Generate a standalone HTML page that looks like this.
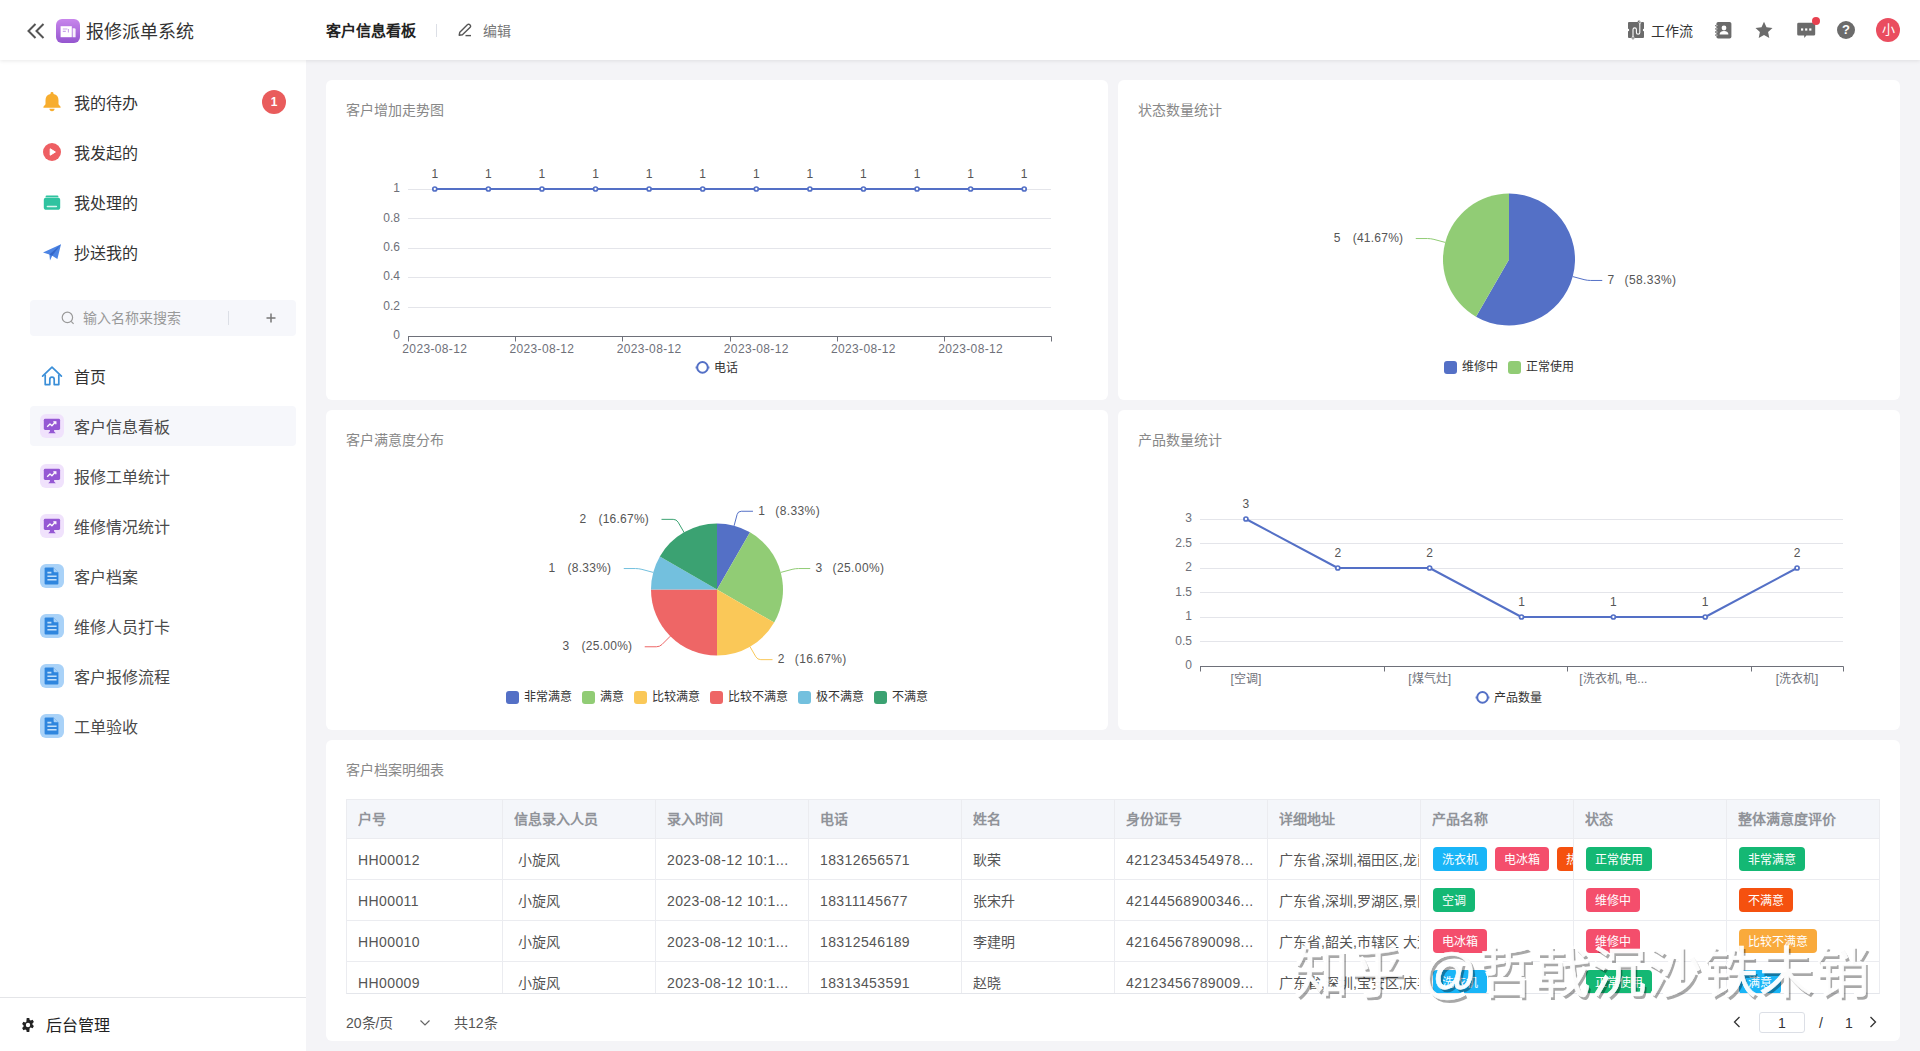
<!DOCTYPE html>
<html lang="zh-CN">
<head>
<meta charset="utf-8">
<title>报修派单系统</title>
<style>
*{box-sizing:border-box;margin:0;padding:0}
html,body{width:1920px;height:1051px;overflow:hidden}
body{position:relative;background:#f4f4f7;font-family:"Liberation Sans",sans-serif;color:#333;font-size:14px}
.abs{position:absolute}
#header{position:absolute;left:0;top:0;width:1920px;height:60px;background:#fff;box-shadow:0 1px 4px rgba(0,0,0,.09);z-index:5}
#sidebar{position:absolute;left:0;top:60px;width:306px;height:991px;background:#fff;z-index:4}
.t{position:absolute;white-space:nowrap;line-height:20px;height:20px}
.card{position:absolute;background:#fff;border-radius:6px}
.ctitle{position:absolute;left:20px;top:20px;font-size:14px;line-height:20px;color:#888;white-space:nowrap}
svg{position:absolute;left:0;top:0;overflow:visible}
svg text{font-family:"Liberation Sans",sans-serif;font-size:12px}
.nav{position:absolute;left:30px;width:266px;height:40px;border-radius:4px}
.nav .lbl{position:absolute;left:44px;top:12px;font-size:16px;line-height:20px;color:#4a4a4a;white-space:nowrap}
.nav .ic{position:absolute;left:10px;top:8px;width:24px;height:24px;border-radius:6px}
.nav.on{background:#f6f7fb}
.pi{background:#f0e2fc}
.di{background:#a9d2f8}

/*TBL*/
.tbl{position:absolute;left:20px;top:59px;width:1534px;height:195px;overflow:hidden;border:1px solid #ebecf0;border-bottom-color:#e4e6eb}
.tbl>div{position:absolute}
.thead{left:0;top:0;width:1534px;height:39px;background:#f4f6fa;border-bottom:1px solid #ebecf0}
.th{top:9px;height:20px;line-height:20px;font-size:14px;font-weight:bold;color:#909399;white-space:nowrap;overflow:hidden;margin-left:-1px}
.td{height:40px;line-height:42px;font-size:14px;color:#555;white-space:nowrap;overflow:hidden;margin-left:-1px}
.td.num{letter-spacing:.4px}
.tags{padding-top:8px;line-height:24px !important;font-size:0;margin-left:0}
.tag{display:inline-block;height:24px;line-height:22px;padding:2px 0 0;text-align:center;overflow:hidden;white-space:nowrap;border-radius:4px;color:#fff;font-size:12px;margin-right:8px;vertical-align:top}
.hl{left:0;width:1534px;height:1px;background:#ebecf0}
.vl{top:0;width:1px;height:195px;background:#ebecf0;margin-left:-1px}
/*/TBL*/
</style>
</head>
<body>

<svg width="0" height="0" style="position:absolute"><defs>
  <g id="mon">
    <rect x="3.800" y="4.800" width="16.300" height="11.200" rx="1.400" fill="#9558d4"/>
    <path d="M8.200 19.200h7.600l-1.700-1.800V16h-4.200v1.400z" fill="#9558d4"/>
    <path d="M7.200 12.800l2.800-2.800 1.900 1.700 3.500-3.700" fill="none" stroke="#fff" stroke-width="1.300" stroke-linejoin="round"/>
    <path d="M13.300 7.800h2.500v2.500" fill="none" stroke="#fff" stroke-width="1.300"/>
  </g>
  <g id="doc">
    <path d="M5.600 3.400h8l4.800 4.800v11.200a1 1 0 0 1-1 1H5.600a1 1 0 0 1-1-1V4.400a1 1 0 0 1 1-1z" fill="#2f86de"/>
    <path d="M13.600 3.400v3.800a1 1 0 0 0 1 1h3.800z" fill="#a9d2f8"/>
    <path d="M7.400 8.600h4M7.400 12.200h9.200M7.400 15.800h9.200" stroke="#c4e0fa" stroke-width="1.600"/>
  </g>
</defs></svg>
<!-- ================= HEADER ================= -->
<div id="header">
  <svg width="20" height="20" style="left:26px;top:21px" viewBox="0 0 20 20"><path d="M9.5 3 L2.5 10 L9.5 17 M17.5 3 L10.5 10 L17.5 17" fill="none" stroke="#555" stroke-width="2"/></svg>
  <div class="abs" style="left:56px;top:19px;width:24px;height:24px;border-radius:6px;background:linear-gradient(180deg,#c886ec 0%,#9556cf 100%)">
    <svg width="24" height="24" viewBox="0 0 24 24"><path d="M4.600 7.200h11.200v11h-11.200z" fill="#fff"/><path d="M16.600 9.200h1.600a1.400 1.400 0 0 1 1.400 1.400v7.600h-3z" fill="#fff" opacity=".9"/><path d="M6.800 10h4.600M6.800 12.400h3" stroke="#c9a3ea" stroke-width="1.100"/><path d="M12.400 10v3.400" stroke="#c9a3ea" stroke-width="1.100"/></svg>
  </div>
  <div class="t" style="left:86px;top:22px;font-size:18px;color:#333">报修派单系统</div>
  <div class="t" style="left:326px;top:21px;font-size:15px;font-weight:bold;color:#222">客户信息看板</div>
  <div class="abs" style="left:436px;top:24px;width:1px;height:13px;background:#dcdfe6"></div>
  <svg width="16" height="16" style="left:457px;top:22px" viewBox="0 0 16 16"><path d="M2.2 13.2 L2.8 10.2 L10.6 2.6 a1.4 1.4 0 0 1 2 0 l.6 .6 a1.4 1.4 0 0 1 0 2 L5.4 12.8 Z" fill="none" stroke="#555" stroke-width="1.4" stroke-linejoin="round"/><path d="M8.5 13.6 H14" stroke="#555" stroke-width="1.4"/></svg>
  <div class="t" style="left:483px;top:21px;font-size:14px;color:#777">编辑</div>
  <!-- right icons -->
  <svg width="18" height="18" style="left:1627px;top:21px" viewBox="0 0 18 18">
    <path d="M2 1h8.600a1.400 1.400 0 0 1 2.800 0H16a1 1 0 0 1 1 1v5.800a1.200 1.200 0 0 0 0 2.400V16a1 1 0 0 1-1 1H7.400a1.400 1.400 0 0 1-2.800 0H2a1 1 0 0 1-1-1v-5.800a1.200 1.200 0 0 0 0-2.400V2a1 1 0 0 1 1-1z" fill="#6b6b6b"/>
    <path d="M6 16V8.600a1.700 1.700 0 0 1 3.400 0v3a1.700 1.700 0 0 0 3.400 0V2" fill="none" stroke="#fff" stroke-width="1.100"/>
    <circle cx="6" cy="16.400" r="1" fill="#6b6b6b" stroke="#fff" stroke-width=".6"/><circle cx="12.800" cy="1.600" r="1" fill="#6b6b6b" stroke="#fff" stroke-width=".6"/>
  </svg>
  <div class="t" style="left:1651px;top:21px;font-size:14px;color:#333">工作流</div>
  <svg width="18" height="18" style="left:1714px;top:21px" viewBox="0 0 18 18">
    <rect x="2.4" y="1" width="15" height="16.6" rx="1.8" fill="#6b6b6b"/>
    <path d="M1 4.6h2.6M1 7.8h2.6M1 11h2.6M1 14.2h2.6" stroke="#6b6b6b" stroke-width="1.3"/>
    <path d="M1.6 4.6h2.2M1.6 7.8h2.2M1.6 11h2.2M1.6 14.2h2.2" stroke="#fff" stroke-width=".5"/>
    <circle cx="10" cy="7" r="2.4" fill="#fff"/>
    <path d="M5.6 13.6a4.4 3.6 0 0 1 8.8 0z" fill="#fff"/>
  </svg>
  <svg width="18" height="18" style="left:1755px;top:21px" viewBox="0 0 18 18"><path d="M9 .8l2.5 5.5 6 .7-4.4 4.1 1.2 5.9L9 14l-5.3 3 1.2-5.9L.5 7l6-.7z" fill="#6b6b6b"/></svg>
  <svg width="24" height="24" style="left:1796px;top:14px" viewBox="0 0 24 24">
    <path d="M2.6 8.8h15.2a1.4 1.4 0 0 1 1.4 1.4v10a1.4 1.4 0 0 1-1.4 1.4H10.4L8.2 24v-2.4H2.6a1.4 1.4 0 0 1-1.4-1.4v-10a1.4 1.4 0 0 1 1.4-1.4z" fill="#6b6b6b"/>
    <rect x="5" y="14.4" width="2.2" height="2.2" fill="#fff"/><rect x="9.1" y="14.4" width="2.2" height="2.2" fill="#fff"/><rect x="13.2" y="14.4" width="2.2" height="2.2" fill="#fff"/>
    <circle cx="20" cy="7" r="4" fill="#e8404f"/>
  </svg>
  <div class="abs" style="left:1837px;top:21px;width:18px;height:18px;border-radius:9px;background:#6b6b6b;color:#fff;font-size:13px;font-weight:bold;line-height:18px;text-align:center">?</div>
  <div class="abs" style="left:1876px;top:18px;width:24px;height:24px;border-radius:12px;background:#ea4d5f;color:#fff;font-size:13px;line-height:24px;text-align:center">小</div>
</div>


<!-- ================= SIDEBAR ================= -->
<div id="sidebar">
  <!-- top group (coords relative to sidebar: page y - 60) -->
  <svg width="20" height="20" style="left:42px;top:31px" viewBox="0 0 20 20">
    <g transform="translate(10 10.400) scale(1.160 1.120) translate(-10 -10)"><path d="M10 1.6a1.3 1.3 0 0 1 1.3 1.3v.5a5.6 5.6 0 0 1 4.3 5.5v3.6l1.8 2.3v.9H2.6v-.9l1.8-2.3V8.9a5.6 5.6 0 0 1 4.3-5.5v-.5A1.3 1.3 0 0 1 10 1.600z" fill="#f7ad2e"/>
    <path d="M7.8 16.6h4.4a2.2 2.2 0 0 1-4.4 0z" fill="#f7ad2e"/>
  </g>
  </svg>
  <div class="t" style="left:74px;top:34px;font-size:16px;color:#333">我的待办</div>
  <div class="abs" style="left:262px;top:30px;width:24px;height:24px;border-radius:12px;background:#e95c5c;color:#fff;font-size:12px;font-weight:bold;line-height:24px;text-align:center">1</div>

  <svg width="20" height="20" style="left:42px;top:82px" viewBox="0 0 20 20"><circle cx="10" cy="10" r="9" fill="#ee5f63"/><path d="M8.200 6.800v6.400L13.400 10z" fill="#fff" stroke="#fff" stroke-width="1" stroke-linejoin="round"/></svg>
  <div class="t" style="left:74px;top:84px;font-size:16px;color:#333">我发起的</div>

  <svg width="20" height="20" style="left:42px;top:132px" viewBox="0 0 20 20">
    <path d="M4.6 3.4h10.8a1 1 0 0 1 1 1v.6H3.6v-.6a1 1 0 0 1 1-1z" fill="#2fc3a0"/>
    <rect x="1.8" y="5.400" width="16.4" height="12.400" rx="2.6" fill="#2fc3a0"/>
    <path d="M5.400 14.400h9" stroke="#d9f6ee" stroke-width="1.500" stroke-linecap="round"/>
  </svg>
  <div class="t" style="left:74px;top:134px;font-size:16px;color:#333">我处理的</div>

  <svg width="20" height="20" style="left:42px;top:183px" viewBox="0 0 20 20">
    <path d="M1 9.400L19 1.200 15.400 16 10.200 12.800 8 17.400 7.400 11.600z" fill="#4c84e4"/>
    <path d="M7.400 11.600L19 1.200 10.200 12.800" fill="#3567c9"/>
  </svg>
  <div class="t" style="left:74px;top:184px;font-size:16px;color:#333">抄送我的</div>

  <!-- search -->
  <div class="abs" style="left:30px;top:240px;width:266px;height:36px;border-radius:4px;background:#f6f7fb">
    <svg width="16" height="16" style="left:30px;top:10px" viewBox="0 0 16 16"><circle cx="7.400" cy="7.400" r="5.200" fill="none" stroke="#9a9a9a" stroke-width="1.200"/><path d="M11.200 11.400l2.400 2.400" stroke="#9a9a9a" stroke-width="1.200"/></svg>
    <div class="t" style="left:53px;top:8px;font-size:14px;color:#999">输入名称来搜索</div>
    <div class="abs" style="left:198px;top:11px;width:1px;height:14px;background:#dcdfe6"></div>
    <svg width="12" height="12" style="left:235px;top:12px" viewBox="0 0 12 12"><path d="M6 1.500v9M1.500 6h9" stroke="#777" stroke-width="1.500"/></svg>
  </div>

  <!-- nav -->
  <div class="nav" style="top:296px">
    <svg width="24" height="24" style="left:10px;top:8px" viewBox="0 0 24 24"><path d="M2.600 12.200L12 3.200l9.400 9" fill="none" stroke="#3b8fd8" stroke-width="1.700" stroke-linecap="round" stroke-linejoin="round"/><path d="M5.200 10.600v10h4.600v-5.200a2.200 2.200 0 0 1 4.400 0v5.200h4.600v-10" fill="none" stroke="#3b8fd8" stroke-width="1.700" stroke-linejoin="round"/></svg>
    <div class="lbl" style="color:#333">首页</div>
  </div>
  <div class="nav on" style="top:346px"><div class="ic pi"><svg width="24" height="24" viewBox="0 0 24 24"><use href="#mon"/></svg></div><div class="lbl">客户信息看板</div></div>
  <div class="nav" style="top:396px"><div class="ic pi"><svg width="24" height="24" viewBox="0 0 24 24"><use href="#mon"/></svg></div><div class="lbl">报修工单统计</div></div>
  <div class="nav" style="top:446px"><div class="ic pi"><svg width="24" height="24" viewBox="0 0 24 24"><use href="#mon"/></svg></div><div class="lbl">维修情况统计</div></div>
  <div class="nav" style="top:496px"><div class="ic di"><svg width="24" height="24" viewBox="0 0 24 24"><use href="#doc"/></svg></div><div class="lbl">客户档案</div></div>
  <div class="nav" style="top:546px"><div class="ic di"><svg width="24" height="24" viewBox="0 0 24 24"><use href="#doc"/></svg></div><div class="lbl">维修人员打卡</div></div>
  <div class="nav" style="top:596px"><div class="ic di"><svg width="24" height="24" viewBox="0 0 24 24"><use href="#doc"/></svg></div><div class="lbl">客户报修流程</div></div>
  <div class="nav" style="top:646px"><div class="ic di"><svg width="24" height="24" viewBox="0 0 24 24"><use href="#doc"/></svg></div><div class="lbl">工单验收</div></div>

  <!-- footer -->
  <div class="abs" style="left:0;top:937px;width:306px;height:1px;background:#e4e5e8"></div>
  <svg width="14" height="14" style="left:21px;top:958px" viewBox="0 0 14 14">
    <path d="M5.700 0h2.600l.4 1.900 1.100.6 1.800-.7 1.300 2.200-1.400 1.300v1.400l1.400 1.300-1.300 2.200-1.800-.7-1.100.6L8.300 14H5.700l-.4-1.900-1.100-.6-1.800.7L1.100 10l1.400-1.300V7.300L1.100 6l1.300-2.200 1.800.7 1.100-.6z" fill="#222"/>
    <circle cx="7" cy="7" r="2.200" fill="#fff"/>
  </svg>
  <div class="t" style="left:46px;top:956px;font-size:16px;color:#222">后台管理</div>
</div>

<!-- ================= CARDS ================= -->
<div class="card" id="c1" style="left:326px;top:80px;width:782px;height:320px"><div class="ctitle">客户增加走势图</div>
<svg width="782" height="320" viewBox="0 0 782 320">
<path d="M82 227.5H725" stroke="#e4e5ea" stroke-width="1"/>
<path d="M82 197.5H725" stroke="#e4e5ea" stroke-width="1"/>
<path d="M82 168.5H725" stroke="#e4e5ea" stroke-width="1"/>
<path d="M82 138.5H725" stroke="#e4e5ea" stroke-width="1"/>
<path d="M82 109.5H725" stroke="#e4e5ea" stroke-width="1"/>
<text x="74" y="259.1" text-anchor="end" fill="#6e7079">0</text>
<text x="74" y="229.7" text-anchor="end" fill="#6e7079">0.2</text>
<text x="74" y="200.3" text-anchor="end" fill="#6e7079">0.4</text>
<text x="74" y="170.9" text-anchor="end" fill="#6e7079">0.6</text>
<text x="74" y="141.5" text-anchor="end" fill="#6e7079">0.8</text>
<text x="74" y="112.1" text-anchor="end" fill="#6e7079">1</text>
<path d="M82 256.5H725.5" stroke="#6e7079" stroke-width="1"/>
<path d="M82.5 256.5v5M189.5 256.5v5M296.5 256.5v5M404.5 256.5v5M511.5 256.5v5M618.5 256.5v5M725.5 256.5v5" stroke="#6e7079" stroke-width="1"/>
<text x="108.79" y="273" text-anchor="middle" fill="#6e7079" style="letter-spacing:.35px">2023-08-12</text>
<text x="215.96" y="273" text-anchor="middle" fill="#6e7079" style="letter-spacing:.35px">2023-08-12</text>
<text x="323.12" y="273" text-anchor="middle" fill="#6e7079" style="letter-spacing:.35px">2023-08-12</text>
<text x="430.29" y="273" text-anchor="middle" fill="#6e7079" style="letter-spacing:.35px">2023-08-12</text>
<text x="537.46" y="273" text-anchor="middle" fill="#6e7079" style="letter-spacing:.35px">2023-08-12</text>
<text x="644.62" y="273" text-anchor="middle" fill="#6e7079" style="letter-spacing:.35px">2023-08-12</text>
<polyline points="108.79,109 162.38,109 215.96,109 269.54,109 323.12,109 376.71,109 430.29,109 483.88,109 537.46,109 591.04,109 644.62,109 698.21,109" fill="none" stroke="#5470c6" stroke-width="2" stroke-linejoin="bevel"/>
<circle cx="108.79" cy="109" r="2" fill="#fff" stroke="#5470c6" stroke-width="1.700"/>
<text x="108.79" y="97.5" text-anchor="middle" fill="#555">1</text>
<circle cx="162.38" cy="109" r="2" fill="#fff" stroke="#5470c6" stroke-width="1.700"/>
<text x="162.38" y="97.5" text-anchor="middle" fill="#555">1</text>
<circle cx="215.96" cy="109" r="2" fill="#fff" stroke="#5470c6" stroke-width="1.700"/>
<text x="215.96" y="97.5" text-anchor="middle" fill="#555">1</text>
<circle cx="269.54" cy="109" r="2" fill="#fff" stroke="#5470c6" stroke-width="1.700"/>
<text x="269.54" y="97.5" text-anchor="middle" fill="#555">1</text>
<circle cx="323.12" cy="109" r="2" fill="#fff" stroke="#5470c6" stroke-width="1.700"/>
<text x="323.12" y="97.5" text-anchor="middle" fill="#555">1</text>
<circle cx="376.71" cy="109" r="2" fill="#fff" stroke="#5470c6" stroke-width="1.700"/>
<text x="376.71" y="97.5" text-anchor="middle" fill="#555">1</text>
<circle cx="430.29" cy="109" r="2" fill="#fff" stroke="#5470c6" stroke-width="1.700"/>
<text x="430.29" y="97.5" text-anchor="middle" fill="#555">1</text>
<circle cx="483.88" cy="109" r="2" fill="#fff" stroke="#5470c6" stroke-width="1.700"/>
<text x="483.88" y="97.5" text-anchor="middle" fill="#555">1</text>
<circle cx="537.46" cy="109" r="2" fill="#fff" stroke="#5470c6" stroke-width="1.700"/>
<text x="537.46" y="97.5" text-anchor="middle" fill="#555">1</text>
<circle cx="591.04" cy="109" r="2" fill="#fff" stroke="#5470c6" stroke-width="1.700"/>
<text x="591.04" y="97.5" text-anchor="middle" fill="#555">1</text>
<circle cx="644.62" cy="109" r="2" fill="#fff" stroke="#5470c6" stroke-width="1.700"/>
<text x="644.62" y="97.5" text-anchor="middle" fill="#555">1</text>
<circle cx="698.21" cy="109" r="2" fill="#fff" stroke="#5470c6" stroke-width="1.700"/>
<text x="698.21" y="97.5" text-anchor="middle" fill="#555">1</text>
<circle cx="376.5" cy="287.400" r="5.300" fill="#fff" stroke="#5470c6" stroke-width="2"/>
<path d="M369.6 287.400h1.200M382.2 287.400h1.200" stroke="#5470c6" stroke-width="2"/>
<text x="388" y="291.600" fill="#333">电话</text>
</svg>
</div><!--/c1-->
<div class="card" id="c2" style="left:1118px;top:80px;width:782px;height:320px"><div class="ctitle">状态数量统计</div>
<svg width="782" height="320" viewBox="0 0 782 320">
<path d="M391 179.5L391 113.5A66 66 0 1 1 358 236.66Z" fill="#5470c6"/>
<path d="M454.75 196.58L466.05 199.61Q469.24 200.46 472.54 200.46L484.24 200.46" fill="none" stroke="#5470c6" stroke-width="1"/>
<text x="489.54" y="203.86" fill="#555">7</text>
<text x="506.54" y="203.86" fill="#555" style="letter-spacing:.4px">(58.33%)</text>
<path d="M391 179.5L358 236.66A66 66 0 0 1 391 113.5Z" fill="#91cc75"/>
<path d="M327.25 162.42L315.95 159.39Q312.76 158.54 309.46 158.54L297.76 158.54" fill="none" stroke="#91cc75" stroke-width="1"/>
<text x="285.36" y="161.94" fill="#555" text-anchor="end" style="letter-spacing:.25px">(41.67%)</text>
<text x="215.66" y="161.94" fill="#555">5</text>
<rect x="326" y="281" width="13" height="13" rx="3" fill="#5470c6"/>
<text x="344" y="290.900" fill="#333">维修中</text>
<rect x="390" y="281" width="13" height="13" rx="3" fill="#91cc75"/>
<text x="408" y="290.900" fill="#333">正常使用</text>
</svg>
</div><!--/c2-->
<div class="card" id="c3" style="left:326px;top:410px;width:782px;height:320px"><div class="ctitle">客户满意度分布</div>
<svg width="782" height="320" viewBox="0 0 782 320">
<path d="M391 179.5L391 113.5A66 66 0 0 1 424 122.34Z" fill="#5470c6"/>
<path d="M408.08 115.75L411.11 104.45Q411.96 101.26 415.26 101.26L426.96 101.26" fill="none" stroke="#5470c6" stroke-width="1"/>
<text x="432.26" y="104.66" fill="#555">1</text>
<text x="449.26" y="104.66" fill="#555" style="letter-spacing:.4px">(8.33%)</text>
<path d="M391 179.5L424 122.34A66 66 0 0 1 448.16 212.5Z" fill="#91cc75"/>
<path d="M454.75 162.42L466.05 159.39Q469.24 158.54 472.54 158.54L484.24 158.54" fill="none" stroke="#91cc75" stroke-width="1"/>
<text x="489.54" y="161.94" fill="#555">3</text>
<text x="506.54" y="161.94" fill="#555" style="letter-spacing:.4px">(25.00%)</text>
<path d="M391 179.5L448.16 212.5A66 66 0 0 1 391 245.5Z" fill="#fac858"/>
<path d="M424 236.66L429.85 246.79Q431.5 249.65 434.8 249.65L446.5 249.65" fill="none" stroke="#fac858" stroke-width="1"/>
<text x="451.8" y="253.05" fill="#555">2</text>
<text x="468.8" y="253.05" fill="#555" style="letter-spacing:.4px">(16.67%)</text>
<path d="M391 179.5L391 245.5A66 66 0 0 1 325 179.5Z" fill="#ee6666"/>
<path d="M344.33 226.17L336.06 234.44Q333.72 236.78 330.42 236.78L318.72 236.78" fill="none" stroke="#ee6666" stroke-width="1"/>
<text x="306.32" y="240.18" fill="#555" text-anchor="end" style="letter-spacing:.25px">(25.00%)</text>
<text x="236.62" y="240.18" fill="#555">3</text>
<path d="M391 179.5L325 179.5A66 66 0 0 1 333.84 146.5Z" fill="#73c0de"/>
<path d="M327.25 162.42L315.95 159.39Q312.76 158.54 309.46 158.54L297.76 158.54" fill="none" stroke="#73c0de" stroke-width="1"/>
<text x="285.36" y="161.94" fill="#555" text-anchor="end" style="letter-spacing:.25px">(8.33%)</text>
<text x="222.58" y="161.94" fill="#555">1</text>
<path d="M391 179.5L333.84 146.5A66 66 0 0 1 391 113.5Z" fill="#3ba272"/>
<path d="M358 122.34L352.15 112.21Q350.5 109.35 347.2 109.35L335.5 109.35" fill="none" stroke="#3ba272" stroke-width="1"/>
<text x="323.1" y="112.75" fill="#555" text-anchor="end" style="letter-spacing:.25px">(16.67%)</text>
<text x="253.4" y="112.75" fill="#555">2</text>
<rect x="180" y="281" width="13" height="13" rx="3" fill="#5470c6"/>
<text x="198" y="290.900" fill="#333">非常满意</text>
<rect x="256" y="281" width="13" height="13" rx="3" fill="#91cc75"/>
<text x="274" y="290.900" fill="#333">满意</text>
<rect x="308" y="281" width="13" height="13" rx="3" fill="#fac858"/>
<text x="326" y="290.900" fill="#333">比较满意</text>
<rect x="384" y="281" width="13" height="13" rx="3" fill="#ee6666"/>
<text x="402" y="290.900" fill="#333">比较不满意</text>
<rect x="472" y="281" width="13" height="13" rx="3" fill="#73c0de"/>
<text x="490" y="290.900" fill="#333">极不满意</text>
<rect x="548" y="281" width="13" height="13" rx="3" fill="#3ba272"/>
<text x="566" y="290.900" fill="#333">不满意</text>
</svg>
</div><!--/c3-->
<div class="card" id="c4" style="left:1118px;top:410px;width:782px;height:320px"><div class="ctitle">产品数量统计</div>
<svg width="782" height="320" viewBox="0 0 782 320">
<path d="M82 231.5H725" stroke="#e4e5ea" stroke-width="1"/>
<path d="M82 207.5H725" stroke="#e4e5ea" stroke-width="1"/>
<path d="M82 182.5H725" stroke="#e4e5ea" stroke-width="1"/>
<path d="M82 158.5H725" stroke="#e4e5ea" stroke-width="1"/>
<path d="M82 133.5H725" stroke="#e4e5ea" stroke-width="1"/>
<path d="M82 109.5H725" stroke="#e4e5ea" stroke-width="1"/>
<text x="74" y="259.1" text-anchor="end" fill="#6e7079">0</text>
<text x="74" y="234.6" text-anchor="end" fill="#6e7079">0.5</text>
<text x="74" y="210.1" text-anchor="end" fill="#6e7079">1</text>
<text x="74" y="185.6" text-anchor="end" fill="#6e7079">1.5</text>
<text x="74" y="161.1" text-anchor="end" fill="#6e7079">2</text>
<text x="74" y="136.6" text-anchor="end" fill="#6e7079">2.5</text>
<text x="74" y="112.1" text-anchor="end" fill="#6e7079">3</text>
<path d="M82 256.5H725.5" stroke="#6e7079" stroke-width="1"/>
<path d="M82.5 256.5v5M266.5 256.5v5M449.5 256.5v5M633.5 256.5v5M725.5 256.5v5" stroke="#6e7079" stroke-width="1"/>
<text x="127.93" y="273" text-anchor="middle" fill="#6e7079">[空调]</text>
<text x="311.64" y="273" text-anchor="middle" fill="#6e7079">[煤气灶]</text>
<text x="495.36" y="273" text-anchor="middle" fill="#6e7079">[洗衣机, 电...</text>
<text x="679.07" y="273" text-anchor="middle" fill="#6e7079">[洗衣机]</text>
<polyline points="127.93,109 219.79,158 311.64,158 403.5,207 495.36,207 587.21,207 679.07,158" fill="none" stroke="#5470c6" stroke-width="2" stroke-linejoin="bevel"/>
<circle cx="127.93" cy="109" r="2" fill="#fff" stroke="#5470c6" stroke-width="1.700"/>
<text x="127.93" y="97.5" text-anchor="middle" fill="#555">3</text>
<circle cx="219.79" cy="158" r="2" fill="#fff" stroke="#5470c6" stroke-width="1.700"/>
<text x="219.79" y="146.5" text-anchor="middle" fill="#555">2</text>
<circle cx="311.64" cy="158" r="2" fill="#fff" stroke="#5470c6" stroke-width="1.700"/>
<text x="311.64" y="146.5" text-anchor="middle" fill="#555">2</text>
<circle cx="403.5" cy="207" r="2" fill="#fff" stroke="#5470c6" stroke-width="1.700"/>
<text x="403.5" y="195.5" text-anchor="middle" fill="#555">1</text>
<circle cx="495.36" cy="207" r="2" fill="#fff" stroke="#5470c6" stroke-width="1.700"/>
<text x="495.36" y="195.5" text-anchor="middle" fill="#555">1</text>
<circle cx="587.21" cy="207" r="2" fill="#fff" stroke="#5470c6" stroke-width="1.700"/>
<text x="587.21" y="195.5" text-anchor="middle" fill="#555">1</text>
<circle cx="679.07" cy="158" r="2" fill="#fff" stroke="#5470c6" stroke-width="1.700"/>
<text x="679.07" y="146.5" text-anchor="middle" fill="#555">2</text>
<circle cx="364.5" cy="287.400" r="5.300" fill="#fff" stroke="#5470c6" stroke-width="2"/>
<path d="M357.6 287.400h1.200M370.2 287.400h1.200" stroke="#5470c6" stroke-width="2"/>
<text x="376" y="291.600" fill="#333">产品数量</text>
</svg>
</div><!--/c4-->
<div class="card" id="c5" style="left:326px;top:740px;width:1574px;height:301px"><div class="ctitle">客户档案明细表</div>
<div class="tbl">
<div class="thead"></div>
<div class="th" style="left:12px;width:143px">户号</div>
<div class="th" style="left:168px;width:140px">信息录入人员</div>
<div class="th" style="left:321px;width:140px">录入时间</div>
<div class="th" style="left:474px;width:140px">电话</div>
<div class="th" style="left:627px;width:140px">姓名</div>
<div class="th" style="left:780px;width:140px">身份证号</div>
<div class="th" style="left:933px;width:140px">详细地址</div>
<div class="th" style="left:1086px;width:140px">产品名称</div>
<div class="th" style="left:1239px;width:140px">状态</div>
<div class="th" style="left:1392px;width:141px">整体满意度评价</div>
<div class="hl" style="top:79px"></div>
<div class="td num" style="left:12px;top:39px;width:143px">HH00012</div>
<div class="td" style="left:172px;top:39px;width:136px">小旋风</div>
<div class="td num" style="left:321px;top:39px;width:140px">2023-08-12 10:1...</div>
<div class="td num" style="left:474px;top:39px;width:140px">18312656571</div>
<div class="td" style="left:627px;top:39px;width:140px">耿荣</div>
<div class="td num" style="left:780px;top:39px;width:140px">42123453454978...</div>
<div class="td" style="left:933px;top:39px;width:140px">广东省,深圳,福田区,龙岗街道</div>
<div class="td tags" style="left:1086px;top:39px;width:140px"><span class="tag" style="background:#19b5f7;width:54px">洗衣机</span><span class="tag" style="background:#f44e6c;width:54px">电冰箱</span><span class="tag" style="background:#f5510f;width:54px">热水器</span></div>
<div class="td tags" style="left:1239px;top:39px;width:140px"><span class="tag" style="background:#14b874;width:66px">正常使用</span></div>
<div class="td tags" style="left:1392px;top:39px;width:141px"><span class="tag" style="background:#14b874;width:66px">非常满意</span></div>
<div class="hl" style="top:120px"></div>
<div class="td num" style="left:12px;top:80px;width:143px">HH00011</div>
<div class="td" style="left:172px;top:80px;width:136px">小旋风</div>
<div class="td num" style="left:321px;top:80px;width:140px">2023-08-12 10:1...</div>
<div class="td num" style="left:474px;top:80px;width:140px">18311145677</div>
<div class="td" style="left:627px;top:80px;width:140px">张宋升</div>
<div class="td num" style="left:780px;top:80px;width:140px">42144568900346...</div>
<div class="td" style="left:933px;top:80px;width:140px">广东省,深圳,罗湖区,景田路</div>
<div class="td tags" style="left:1086px;top:80px;width:140px"><span class="tag" style="background:#14b874;width:42px">空调</span></div>
<div class="td tags" style="left:1239px;top:80px;width:140px"><span class="tag" style="background:#f44e6c;width:54px">维修中</span></div>
<div class="td tags" style="left:1392px;top:80px;width:141px"><span class="tag" style="background:#f5510f;width:54px">不满意</span></div>
<div class="hl" style="top:161px"></div>
<div class="td num" style="left:12px;top:121px;width:143px">HH00010</div>
<div class="td" style="left:172px;top:121px;width:136px">小旋风</div>
<div class="td num" style="left:321px;top:121px;width:140px">2023-08-12 10:1...</div>
<div class="td num" style="left:474px;top:121px;width:140px">18312546189</div>
<div class="td" style="left:627px;top:121px;width:140px">李建明</div>
<div class="td num" style="left:780px;top:121px;width:140px">42164567890098...</div>
<div class="td" style="left:933px;top:121px;width:140px">广东省,韶关,市辖区 大道东路</div>
<div class="td tags" style="left:1086px;top:121px;width:140px"><span class="tag" style="background:#f44e6c;width:54px">电冰箱</span></div>
<div class="td tags" style="left:1239px;top:121px;width:140px"><span class="tag" style="background:#f44e6c;width:54px">维修中</span></div>
<div class="td tags" style="left:1392px;top:121px;width:141px"><span class="tag" style="background:#f9aa3c;width:78px">比较不满意</span></div>
<div class="hl" style="top:202px"></div>
<div class="td num" style="left:12px;top:162px;width:143px">HH00009</div>
<div class="td" style="left:172px;top:162px;width:136px">小旋风</div>
<div class="td num" style="left:321px;top:162px;width:140px">2023-08-12 10:1...</div>
<div class="td num" style="left:474px;top:162px;width:140px">18313453591</div>
<div class="td" style="left:627px;top:162px;width:140px">赵晓</div>
<div class="td num" style="left:780px;top:162px;width:140px">42123456789009...</div>
<div class="td" style="left:933px;top:162px;width:140px">广东省,深圳,宝安区,庆丰路</div>
<div class="td tags" style="left:1086px;top:162px;width:140px"><span class="tag" style="background:#19b5f7;width:54px">洗衣机</span></div>
<div class="td tags" style="left:1239px;top:162px;width:140px"><span class="tag" style="background:#14b874;width:66px">正常使用</span></div>
<div class="td tags" style="left:1392px;top:162px;width:141px"><span class="tag" style="background:#19b5f7;width:42px">满意</span></div>
<div class="vl" style="left:156px"></div>
<div class="vl" style="left:309px"></div>
<div class="vl" style="left:462px"></div>
<div class="vl" style="left:615px"></div>
<div class="vl" style="left:768px"></div>
<div class="vl" style="left:921px"></div>
<div class="vl" style="left:1074px"></div>
<div class="vl" style="left:1227px"></div>
<div class="vl" style="left:1380px"></div>
</div>
<div class="t" style="left:20px;top:273px;font-size:14px;color:#555">20条/页</div>
<svg width="12" height="8" style="left:93px;top:279px" viewBox="0 0 12 8"><path d="M1.500 1.500L6 6l4.500-4.500" fill="none" stroke="#666" stroke-width="1.200"/></svg>
<div class="t" style="left:128px;top:273px;font-size:14px;color:#555">共12条</div>
<svg width="8" height="12" style="left:1407px;top:276px" viewBox="0 0 8 12"><path d="M6.500 1L1.500 6l5 5" fill="none" stroke="#333" stroke-width="1.300"/></svg>
<div class="abs" style="left:1433px;top:272px;width:46px;height:21px;border:1px solid #dcdfe6;border-radius:3px;text-align:center;line-height:20px;font-size:14px;color:#333">1</div>
<div class="t" style="left:1493px;top:273px;font-size:14px;color:#333">/</div>
<div class="t" style="left:1519px;top:273px;font-size:14px;color:#333">1</div>
<svg width="8" height="12" style="left:1543px;top:276px" viewBox="0 0 8 12"><path d="M1.500 1l5 5-5 5" fill="none" stroke="#333" stroke-width="1.300"/></svg>
</div><!--/c5-->

<div id="wm" style="position:absolute;left:1293px;top:941px;font-size:55px;line-height:64px;height:64px;white-space:nowrap;color:rgba(255,255,255,.96);-webkit-text-stroke:.6px rgba(255,255,255,.96);text-shadow:2.5px 2.5px 0 rgba(0,0,0,.34);z-index:9"><span style="display:inline-block;width:56px;text-align:center">知</span><span style="display:inline-block;width:56px;text-align:center">乎</span><span style="display:inline-block;width:16px"> </span><span style="display:inline-block;width:57px;text-align:center">@</span><span style="display:inline-block;width:56px;text-align:center">哲</span><span style="display:inline-block;width:56px;text-align:center">戟</span><span style="display:inline-block;width:56px;text-align:center">沉</span><span style="display:inline-block;width:56px;text-align:center">沙</span><span style="display:inline-block;width:56px;text-align:center">铁</span><span style="display:inline-block;width:56px;text-align:center">未</span><span style="display:inline-block;width:56px;text-align:center">销</span></div>
</body>
</html>
